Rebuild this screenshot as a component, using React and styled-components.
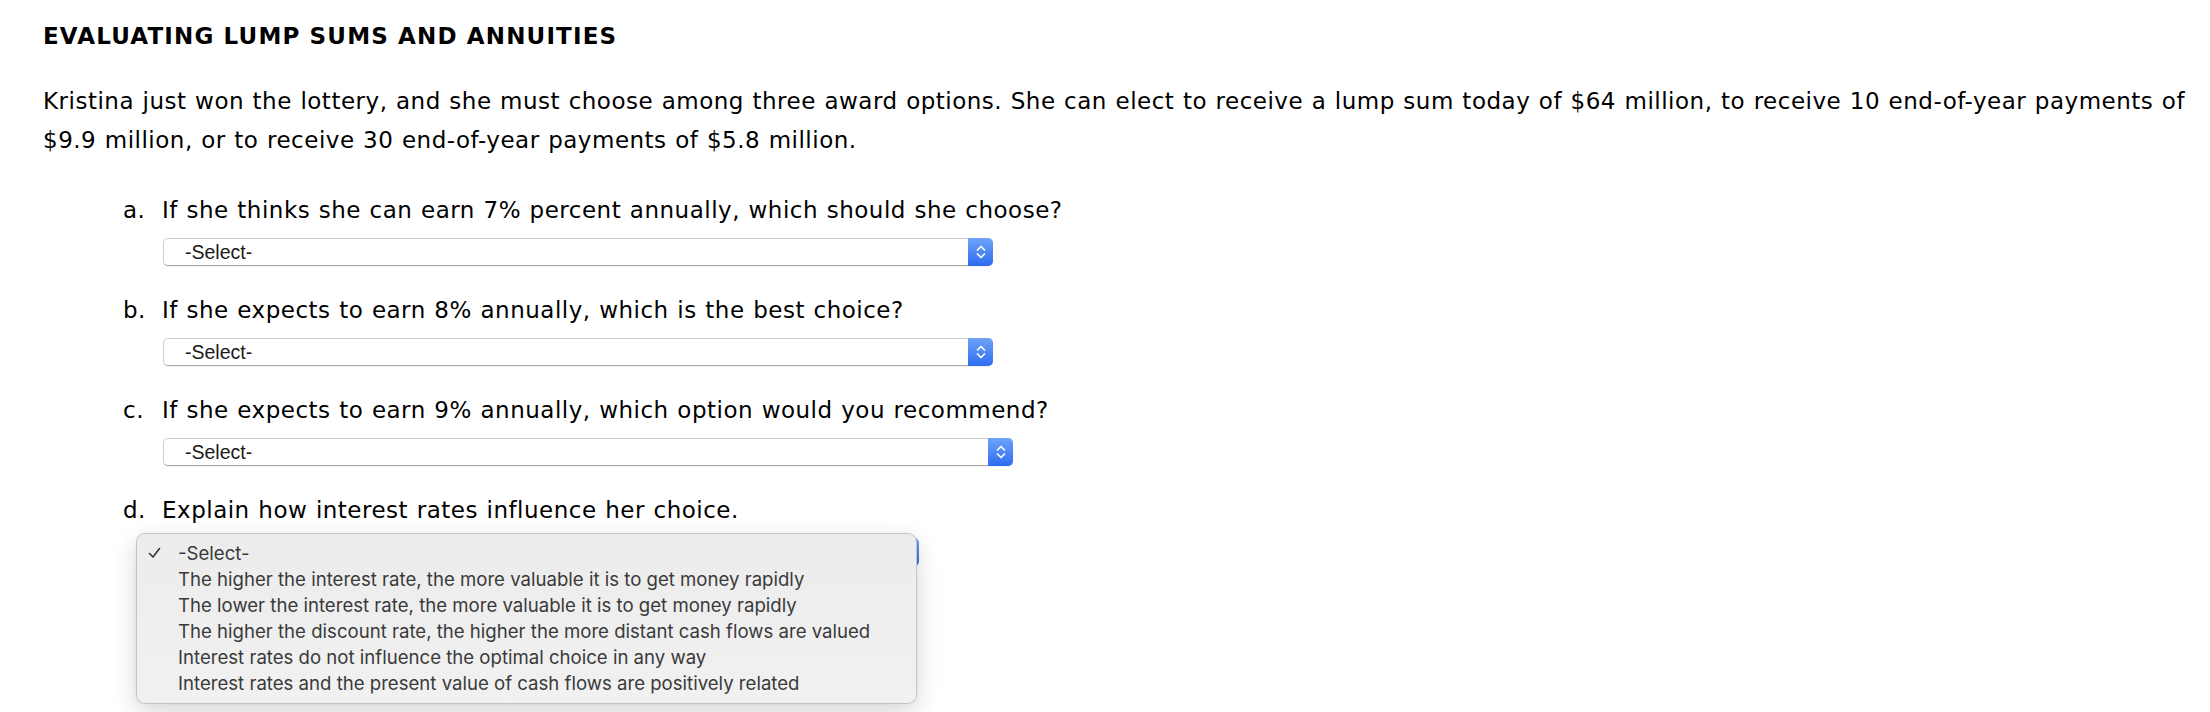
import React from "react";
import styled, { createGlobalStyle } from "styled-components";

const GlobalStyle = createGlobalStyle`
  body {
    margin: 0;
    background: #fff;
  }
`;

const Page = styled.div`
  box-sizing: border-box;
  min-height: 100vh;
  padding: 24px 20px 0 43px;
  font-family: "DejaVu Sans", Verdana, sans-serif;
  color: #000;
`;

const Heading = styled.h2`
  margin: 0;
  font-size: 23px;
  line-height: 25px;
  font-weight: bold;
  letter-spacing: 1.15px;
`;

const Intro = styled.p`
  margin: 33px 0 0;
  font-size: 23px;
  line-height: 39px;
  letter-spacing: 0.5px;
  word-spacing: 0.75px;
`;

const Questions = styled.ol`
  margin: 35px 0 0 80px;
  padding: 0;
  list-style: none;
`;

const Item = styled.li`
  & + & {
    margin-top: 29px;
  }
`;

const Prompt = styled.div`
  display: flex;
  font-size: 23px;
  line-height: 30px;
  letter-spacing: 0.5px;
  word-spacing: 0.8px;
`;

const Marker = styled.span`
  flex: none;
  width: 39px;
`;

const SelectWrap = styled.div`
  position: relative;
  margin: 13px 0 0 40px;
`;

const SelectBox = styled.div`
  display: flex;
  box-sizing: border-box;
  width: ${(p) => p.$width}px;
  height: 28px;
  background: #fff;
  border: 1px solid #cdcdcd;
  border-bottom-color: #a8a8a8;
  border-radius: 5px;
  box-shadow: 0 1px 1px rgba(0, 0, 0, 0.06);
`;

const SelectLabel = styled.span`
  flex: 1;
  padding-left: 21px;
  font-family: "Liberation Sans", Arial, sans-serif;
  font-size: 19.5px;
  line-height: 26px;
  color: #1a1a1a;
  visibility: ${(p) => (p.$covered ? "hidden" : "visible")};
`;

const Stepper = styled.span`
  display: flex;
  align-items: center;
  justify-content: center;
  width: 25px;
  margin: -1px -1px -1px 0;
  border-radius: 0 5px 5px 0;
  background: linear-gradient(#6fa4f8, #2d6cf0);
`;

const Menu = styled.ul`
  position: absolute;
  left: -27px;
  top: -5px;
  z-index: 2;
  box-sizing: border-box;
  width: 781px;
  margin: 0;
  padding: 6px 0 7px 11px;
  list-style: none;
  background: linear-gradient(#ececec, #f1f1f1);
  border: 1px solid #c4c4c4;
  border-radius: 9px;
  box-shadow: 0 8px 24px rgba(0, 0, 0, 0.16), 0 0 3px rgba(0, 0, 0, 0.06);
  font-family: Inter, "Liberation Sans", sans-serif;
  font-size: 18.6px;
  line-height: 26px;
  color: #3a3a3a;
`;

const MenuItem = styled.li`
  display: flex;
  align-items: center;
  height: 26px;
`;

const Check = styled.span`
  display: flex;
  flex: none;
  width: 30px;
`;

const Chevrons = () => (
  <svg width="10" height="16" viewBox="0 0 10 16">
    <path
      d="M1.5 6 5 2.5 8.5 6 M1.5 10 5 13.5 8.5 10"
      stroke="#fff"
      strokeWidth="1.7"
      fill="none"
      strokeLinecap="round"
      strokeLinejoin="round"
    />
  </svg>
);

const CheckMark = () => (
  <svg width="13" height="12" viewBox="0 0 13 12">
    <path
      d="M1.5 6.5 5 10 11.5 1.5"
      stroke="#333"
      strokeWidth="1.6"
      fill="none"
      strokeLinecap="round"
      strokeLinejoin="round"
    />
  </svg>
);

const Select = ({ width, open, children }) => (
  <SelectWrap>
    <SelectBox $width={width}>
      <SelectLabel $covered={open}>-Select-</SelectLabel>
      <Stepper>
        <Chevrons />
      </Stepper>
    </SelectBox>
    {children}
  </SelectWrap>
);

const options = [
  "-Select-",
  "The higher the interest rate, the more valuable it is to get money rapidly",
  "The lower the interest rate, the more valuable it is to get money rapidly",
  "The higher the discount rate, the higher the more distant cash flows are valued",
  "Interest rates do not influence the optimal choice in any way",
  "Interest rates and the present value of cash flows are positively related",
];

const questions = [
  { mark: "a.", text: "If she thinks she can earn 7% percent annually, which should she choose?", width: 830 },
  { mark: "b.", text: "If she expects to earn 8% annually, which is the best choice?", width: 830 },
  { mark: "c.", text: "If she expects to earn 9% annually, which option would you recommend?", width: 850 },
  { mark: "d.", text: "Explain how interest rates influence her choice.", width: 756, open: true },
];

export default function App() {
  return (
    <Page>
      <GlobalStyle />
      <Heading>EVALUATING LUMP SUMS AND ANNUITIES</Heading>
      <Intro>
        Kristina just won the lottery, and she must choose among three award options. She can elect to
        receive a lump sum today of $64 million, to receive 10 end-of-year payments of $9.9 million, or to
        receive 30 end-of-year payments of $5.8 million.
      </Intro>
      <Questions>
        {questions.map((q) => (
          <Item key={q.mark}>
            <Prompt>
              <Marker>{q.mark}</Marker>
              <span>{q.text}</span>
            </Prompt>
            <Select width={q.width} open={q.open}>
              {q.open && (
                <Menu>
                  {options.map((o, i) => (
                    <MenuItem key={o}>
                      <Check>{i === 0 && <CheckMark />}</Check>
                      {o}
                    </MenuItem>
                  ))}
                </Menu>
              )}
            </Select>
          </Item>
        ))}
      </Questions>
    </Page>
  );
}
